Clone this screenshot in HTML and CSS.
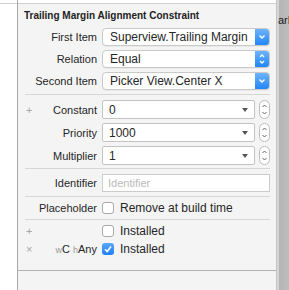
FILE: index.html
```html
<!DOCTYPE html>
<html lang="en">
<head>
    <meta charset="UTF-8">
    <title>Constraint Inspector</title>
    <link rel="stylesheet" href="styles.css">
</head>
<body>

    <div class="screen">
        <div class="gutter">
            <div class="gutter-top"></div>
        </div>

        <div class="panel">
            <div class="panel-top"></div>
            <div class="title">Trailing Margin Alignment Constraint</div>

            <div class="group items">
                <div class="row">
                    <div class="label"><span class="mark"></span><span>First Item</span></div>
                    <div class="popup">
                        <span class="popup-text">Superview.Trailing Margin</span>
                        <span class="popup-arrow">
                            <svg width="14" height="16" viewBox="0 0 14 16"><polyline points="4.5,6.5 7,9 9.5,6.5" fill="none" stroke="#fff" stroke-width="1.4"/></svg>
                        </span>
                    </div>
                </div>
                <div class="row">
                    <div class="label"><span class="mark"></span><span>Relation</span></div>
                    <div class="popup">
                        <span class="popup-text">Equal</span>
                        <span class="popup-arrow">
                            <svg width="14" height="16" viewBox="0 0 14 16"><polyline points="5,6 7,4 9,6" fill="none" stroke="#fff" stroke-width="1.3"/><polyline points="5,10 7,12 9,10" fill="none" stroke="#fff" stroke-width="1.3"/></svg>
                        </span>
                    </div>
                </div>
                <div class="row">
                    <div class="label"><span class="mark"></span><span>Second Item</span></div>
                    <div class="popup">
                        <span class="popup-text">Picker View.Center X</span>
                        <span class="popup-arrow">
                            <svg width="14" height="16" viewBox="0 0 14 16"><polyline points="4.5,6.5 7,9 9.5,6.5" fill="none" stroke="#fff" stroke-width="1.4"/></svg>
                        </span>
                    </div>
                </div>
            </div>

            <div class="sep sep-a"></div>

            <div class="group combos">
                <div class="row row-combo">
                    <div class="label"><span class="mark">+</span><span>Constant</span></div>
                    <div class="combo-wrap">
                        <div class="combo"><span>0</span><span class="tri"></span></div>
                        <div class="stepper">
                            <svg width="9" height="17" viewBox="0 0 9 17"><polyline points="2.5,6 4.5,4 6.5,6" fill="none" stroke="#666" stroke-width="1"/><polyline points="2.5,11 4.5,13 6.5,11" fill="none" stroke="#666" stroke-width="1"/></svg>
                        </div>
                    </div>
                </div>
                <div class="row row-combo">
                    <div class="label"><span class="mark"></span><span>Priority</span></div>
                    <div class="combo-wrap">
                        <div class="combo"><span>1000</span><span class="tri"></span></div>
                        <div class="stepper">
                            <svg width="9" height="17" viewBox="0 0 9 17"><polyline points="2.5,6 4.5,4 6.5,6" fill="none" stroke="#666" stroke-width="1"/><polyline points="2.5,11 4.5,13 6.5,11" fill="none" stroke="#666" stroke-width="1"/></svg>
                        </div>
                    </div>
                </div>
                <div class="row row-combo">
                    <div class="label"><span class="mark"></span><span>Multiplier</span></div>
                    <div class="combo-wrap">
                        <div class="combo"><span>1</span><span class="tri"></span></div>
                        <div class="stepper">
                            <svg width="9" height="17" viewBox="0 0 9 17"><polyline points="2.5,6 4.5,4 6.5,6" fill="none" stroke="#666" stroke-width="1"/><polyline points="2.5,11 4.5,13 6.5,11" fill="none" stroke="#666" stroke-width="1"/></svg>
                        </div>
                    </div>
                </div>
            </div>

            <div class="sep sep-b"></div>

            <div class="row row-field">
                <div class="label"><span class="mark"></span><span>Identifier</span></div>
                <div class="field">Identifier</div>
            </div>

            <div class="sep sep-c"></div>

            <div class="row row-check">
                <div class="label"><span class="mark"></span><span>Placeholder</span></div>
                <div class="check-line"><span class="box"></span><span>Remove at build time</span></div>
            </div>

            <div class="sep sep-d"></div>

            <div class="row row-check row-installed">
                <div class="label"><span class="mark">+</span><span></span></div>
                <div class="check-line"><span class="box"></span><span>Installed</span></div>
            </div>
            <div class="row row-check row-variant">
                <div class="label"><span class="mark">&times;</span><span><small>w</small>C <small>h</small>Any</span></div>
                <div class="check-line">
                    <span class="box checked">
                        <svg width="12" height="12" viewBox="0 0 12 12"><polyline points="3,6.2 5.2,8.5 9,3.5" fill="none" stroke="#fff" stroke-width="1.6"/></svg>
                    </span>
                    <span>Installed</span>
                </div>
            </div>

            <div class="panel-bottom"></div>
        </div>

        <div class="side">
            <div class="side-text">arH</div>
        </div>
    </div>

</body>
</html>
```

FILE: styles.css
```css
/* Page */
body {
    margin: 0;
    background-color: #ffffff;
    font-family: 'Liberation Sans', Arial, sans-serif;
    color: #262626;
}

.screen {
    display: flex;
    width: 289px;
    height: 290px;
    overflow: hidden;
}

/* Left white strip */
.gutter {
    width: 17px;
    flex: none;
}

.gutter-top {
    height: 3px;
    border-bottom: 1px solid #d0d0d0;
}

/* Inspector panel */
.panel {
    width: 258px;
    flex: none;
    background-color: #f4f4f4;
    border-left: 1px solid #a9a9a9;
    border-right: 1px solid #c4c4c4;
}

.panel-top {
    height: 3px;
    background-color: #ffffff;
    border-bottom: 1px solid #d0d0d0;
}

.title {
    font-size: 10px;
    font-weight: bold;
    line-height: 14px;
    padding: 5px 0 0 6px;
    color: #222;
}

.group {
    display: flex;
    flex-direction: column;
    gap: 4px;
}

.items {
    margin-top: 5px;
}

.row {
    display: grid;
    grid-template-columns: 79px 168px;
    column-gap: 5px;
    align-items: center;
}

.label {
    display: flex;
    justify-content: space-between;
    align-items: center;
    padding-left: 8px;
    font-size: 11px;
    white-space: nowrap;
}

.mark {
    color: #a6a6a6;
    font-size: 11px;
}

.label small {
    font-size: 9px;
    color: #9a9a9a;
}

/* Pop up buttons */
.popup {
    display: flex;
    height: 18px;
    box-sizing: border-box;
    background-color: #ffffff;
    border: 1px solid #c9c9c9;
    border-radius: 4px;
    box-shadow: 0 1px 0 rgba(0, 0, 0, 0.04);
    overflow: hidden;
}

.popup-text {
    flex: 1;
    font-size: 12px;
    line-height: 16px;
    padding-left: 7px;
    white-space: nowrap;
}

.popup-arrow {
    width: 14px;
    display: flex;
    align-items: center;
    justify-content: center;
    background-image: linear-gradient(#6db4fb, #2186f7);
}

/* Separators */
.sep {
    height: 1px;
    background-color: #d6d6d6;
    margin-left: 7px;
    margin-right: 6px;
}

.sep-a { margin-top: 4px; }
.sep-b { margin-top: 3px; }
.sep-c { margin-top: 4px; }
.sep-d { margin-top: 3px; }

/* Combo boxes */
.combos {
    margin-top: 5px;
}

.combo-wrap {
    display: flex;
    gap: 4px;
    height: 19px;
}

.combo {
    flex: 1;
    display: flex;
    align-items: center;
    justify-content: space-between;
    box-sizing: border-box;
    background-color: #ffffff;
    border: 1px solid #c3c3c3;
    border-radius: 2px;
    padding: 0 6px 0 6px;
    font-size: 12px;
}

.tri {
    width: 0;
    height: 0;
    border-left: 3.5px solid transparent;
    border-right: 3.5px solid transparent;
    border-top: 4px solid #555;
}

.stepper {
    width: 11px;
    box-sizing: border-box;
    border: 1px solid #bcbcbc;
    border-radius: 6px;
    background-color: #ffffff;
    display: flex;
    align-items: center;
    justify-content: center;
}

/* Text field */
.row-field {
    margin-top: 5px;
}

.field {
    height: 18px;
    box-sizing: border-box;
    background-color: #ffffff;
    border: 1px solid #cbcbcb;
    font-size: 11px;
    line-height: 16px;
    padding-left: 5px;
    color: #b9b9b9;
}

/* Check boxes */
.row-check {
    height: 16px;
    margin-top: 3px;
}

.row-installed {
    margin-top: 3px;
}

.row-variant {
    margin-top: 2px;
}

.check-line {
    display: flex;
    align-items: center;
    gap: 6px;
    font-size: 12px;
}

.box {
    width: 12px;
    height: 12px;
    box-sizing: border-box;
    border: 1px solid #a9a9a9;
    border-radius: 3px;
    background-color: #ffffff;
    display: flex;
}

.box.checked {
    border: none;
    background-image: linear-gradient(#5aa8fa, #1f7ff4);
}

.panel-bottom {
    margin-top: 13px;
    height: 1px;
    background-color: #b3b3b3;
}

/* Right strip */
.side {
    flex: 1;
    background-image: linear-gradient(to right, #d6d6d6 0, #d6d6d6 2px, #b4b4b4 2px, #bdbdbd 100%);
    overflow: hidden;
}

.side-text {
    font-size: 11px;
    margin-top: 14px;
    margin-left: 1px;
    white-space: nowrap;
    color: #222;
}
```
